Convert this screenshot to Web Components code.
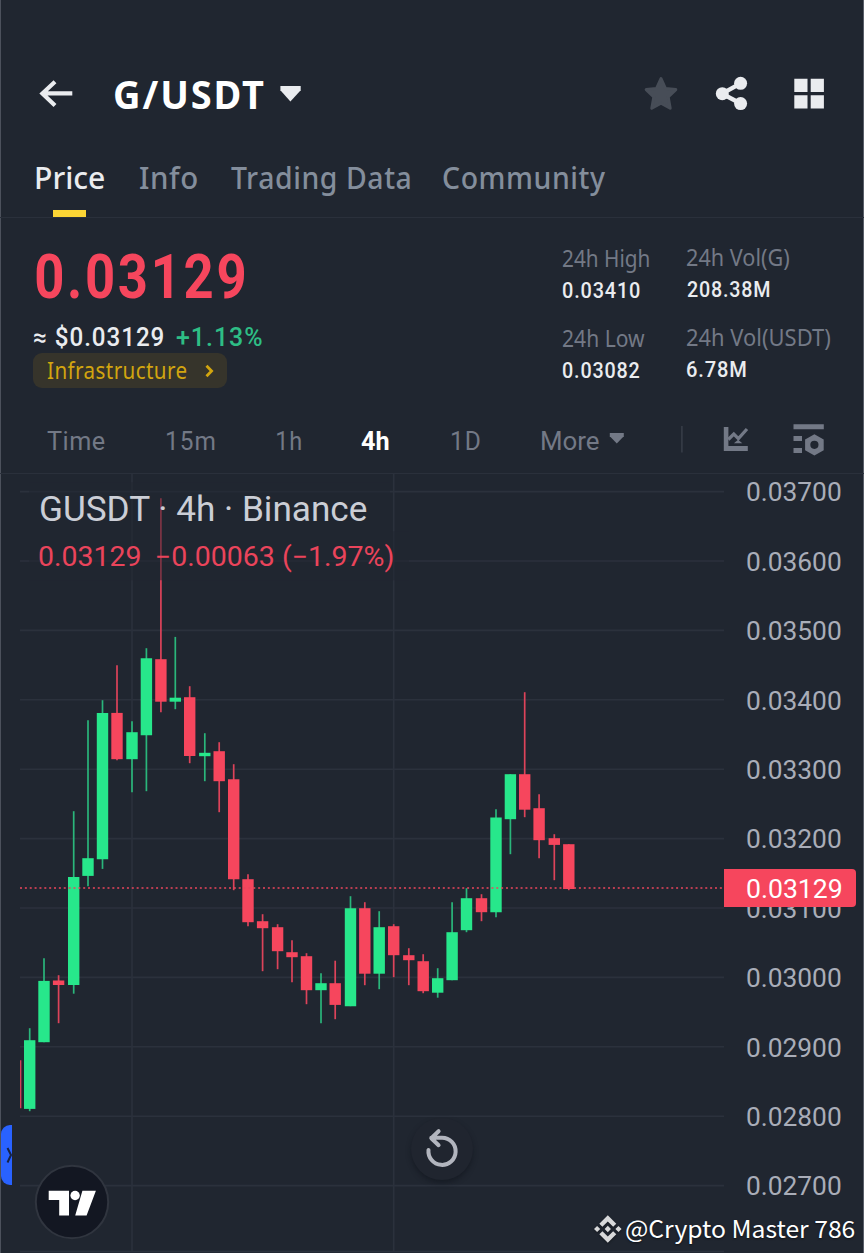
<!DOCTYPE html>
<html lang="en">
<head>
<meta charset="utf-8">
<title>G/USDT</title>
<style>
html,body{margin:0;padding:0;background:#202630}
body{width:864px;height:1253px;overflow:hidden}
</style>
</head>
<body>
<market-app></market-app>
<script>
/* Text sized by its cap height (cap) and drawn width (w); the host box spans cap top to baseline.
   track adds letter spacing in em before the width is fitted. */
const FACES = {
  roboto: {family: 'Roboto, sans-serif', cap: .711, shift: .014},
  noto: {family: '"Noto Sans", sans-serif', cap: .714, shift: -.031},
  cjk: {family: '"Noto Sans CJK SC", "Noto Sans", sans-serif', cap: .733, shift: -.07}
};
const pen = document.createElement('canvas').getContext('2d');
class FitText extends HTMLElement {
  connectedCallback() {
    const face = FACES[this.getAttribute('face') || 'roboto'];
    const cap = +this.getAttribute('cap'), w = +this.getAttribute('w');
    const weight = this.getAttribute('weight') || 400;
    const size = cap / face.cap;
    const track = (+this.getAttribute('track') || 0) * size;
    pen.font = `${weight} ${size}px ${face.family}`;
    const text = this.textContent, m = pen.measureText(text);
    const ink = m.actualBoundingBoxRight + m.actualBoundingBoxLeft + track * (text.length - 1);
    const s = w / ink, dx = m.actualBoundingBoxLeft * s;
    this.attachShadow({mode: 'open'}).innerHTML = `
      <style>
        :host{display:block;flex:none;width:${w}px;height:${cap}px}
        span{display:block;width:max-content;white-space:nowrap;font:${weight} ${size}px/${cap}px ${face.family};letter-spacing:${track}px;
          transform-origin:0 0;transform:translate(${dx}px,${face.shift * size}px) scaleX(${s})}
      </style><span><slot></slot></span>`;
  }
}

const define = (name, html) => customElements.define(name, class extends HTMLElement {
  constructor() { super(); this.attachShadow({mode: 'open'}).innerHTML = html; }
});

define('title-bar', `
<style>
:host{display:flex;height:150px;box-sizing:border-box;padding:75px 38px 0 38px;align-items:flex-start}
svg{flex:none;display:block}
fit-text{color:#fff;margin:6.4px 14.8px 0 40.5px}
.gap{flex:1}
</style>
<svg width="36" height="36" viewBox="38 75 36 36" fill="none" stroke="#eaecef" stroke-width="4.2"><path d="M72.3 93.4H43M55 81.8 42.4 93.5 55 105.6"/></svg>
<fit-text face="noto" weight="700" cap="28.5" w="149" track=".05">G/USDT</fit-text>
<svg width="26" height="36" viewBox="278.3 75 26 36"><path d="M280.7 86H301v4.3L290.7 101.4 280.7 90.3z" fill="#eaecef"/></svg>
<div class="gap"></div>
<svg width="188" height="38" viewBox="638 75 188 38">
  <path d="M661 78.6l4.4 9.8 10.4 1.2-7.6 7.4 2 11.2-9.2-5-9.2 5 2-11.2-7.6-7.4 10.4-1.2z" fill="#474d57" stroke="#474d57" stroke-width="3" stroke-linejoin="round"/>
  <g fill="#eaecef"><path d="M740.7 83.3 722 93.7l18.7 9.8" fill="none" stroke="#eaecef" stroke-width="4.4"/>
  <circle cx="722.3" cy="93.7" r="6.5"/><circle cx="740.6" cy="83.3" r="6.5"/><circle cx="740.6" cy="103.6" r="6.5"/>
  <path d="M794.3 78.7h13.2v13.2h-13.2zM810.7 78.7h13.2v13.2h-13.2zM794.3 95.2h13.2v13.4h-13.2zM810.7 95.2h13.2v13.4h-13.2z"/></g>
</svg>`);

define('section-tabs', `
<style>
:host{display:flex;height:68px;box-sizing:border-box;border-bottom:1.5px solid #2a303b;padding:17.9px 0 0 36px;align-items:flex-start;color:#848e9c}
.on{color:#eaecef;margin-right:36px}
i{display:block;width:33px;height:7px;background:#fcd535;margin:20.5px 0 0 17px}
.b{margin-right:34px}
</style>
<div class="on"><fit-text face="noto" weight="500" cap="21.6" w="68">Price</fit-text><i></i></div>
<fit-text class="b" face="noto" cap="21.6" w="56.7" weight="500" track=".02">Info</fit-text>
<fit-text class="b" face="noto" cap="21.6" w="178.7" weight="500" track=".02">Trading Data</fit-text>
<fit-text face="noto" cap="21.6" w="162" weight="500" track=".02">Community</fit-text>`);

define('market-stat', `
<style>
:host{display:block;color:#eaecef}
.k{color:#737986;margin-bottom:14.5px}
</style>
<div class="k"><slot name="label"></slot></div><slot></slot>`);

define('ticker-panel', `
<style>
:host{display:flex;height:182px;box-sizing:border-box;padding-top:37.2px;align-items:flex-start}
.main{width:527.4px;flex:none;padding-left:36px}
.big{color:#f6465d}
.row{display:flex;gap:13px;margin:30.2px 0 0 -2.3px;color:#eaecef}
.up{color:#2ebd85}
.tag{display:flex;margin:6px 0 0 -3px;width:194px;height:35px;box-sizing:border-box;border-radius:9px;background:#36342b;color:#d2a50f;padding:9.8px 0 0 14px}
.tag svg{margin:1px 0 0 18.7px}
.stats{display:grid;grid-template-columns:124px 150px;margin-top:-3.2px;row-gap:33.4px}
.lift{margin-top:-1.1px}
</style>
<div class="main">
  <fit-text class="big" weight="700" cap="43.4" w="208" track=".05">0.03129</fit-text>
  <div class="row"><fit-text weight="500" cap="18" w="129" track=".04">≈ $0.03129</fit-text><fit-text class="up" weight="500" cap="18" w="86" track=".04">+1.13%</fit-text></div>
  <div class="tag"><fit-text face="noto" cap="16.4" w="139.3" track=".02">Infrastructure</fit-text>
  <svg width="9" height="14" viewBox="0 0 9 14"><path d="M1.5 1.7 6.6 7 1.5 12.3" fill="none" stroke="#d2a50f" stroke-width="2.8"/></svg></div>
</div>
<div class="stats">
  <market-stat><fit-text slot="label" face="noto" cap="16.2" w="86.5">24h High</fit-text><fit-text weight="500" cap="15.9" w="76.7" track=".04">0.03410</fit-text></market-stat>
  <market-stat class="lift"><fit-text slot="label" face="noto" cap="16.2" w="102">24h Vol(G)</fit-text><fit-text weight="500" cap="15.9" w="82" track=".04">208.38M</fit-text></market-stat>
  <market-stat><fit-text slot="label" face="noto" cap="16.2" w="81.7">24h Low</fit-text><fit-text weight="500" cap="15.9" w="76" track=".04">0.03082</fit-text></market-stat>
  <market-stat class="lift"><fit-text slot="label" face="noto" cap="16.2" w="143">24h Vol(USDT)</fit-text><fit-text weight="500" cap="15.9" w="58.4" track=".04">6.78M</fit-text></market-stat>
</div>`);

define('interval-bar', `
<style>
:host{display:flex;height:74px;box-sizing:border-box;border-bottom:1.5px solid #2a303b;padding:31.8px 0 0 47px;align-items:flex-start;color:#737986}
svg{display:block;flex:none}
.on{color:#fff}
</style>
<fit-text cap="18.2" w="57.7" track=".02">Time</fit-text>
<fit-text style="margin-left:62px" cap="18.2" w="47.5" track=".04">15m</fit-text>
<fit-text style="margin-left:62.4px" cap="18.2" w="24.3" track=".04">1h</fit-text>
<fit-text class="on" style="margin:.9px 0 0 60.6px" weight="700" cap="18" w="27.4">4h</fit-text>
<fit-text style="margin-left:63.2px" cap="18.2" w="28.2" track=".04">1D</fit-text>
<fit-text style="margin-left:61.4px" cap="18.2" w="57">More</fit-text>
<svg style="margin:-9.8px 0 0 8.5px" width="220" height="36" viewBox="607.2 422 220 36" fill="#737986">
  <path d="M610 433h14v3.2l-7 7.3-7-7.3z"/>
  <path d="M681.3 426h1.6v26.5h-1.6z" fill="#373d48"/>
  <path d="M724 427h4.6v18.9H748v5H724z"/>
  <path d="M728.5 439.5 734 434l4.6 4.6 8.6-9.6" fill="none" stroke="#737986" stroke-width="3.2"/>
  <path d="M738.3 439.8l4.2 3.4h-8.4z"/>
  <path d="M793.7 424.2H824v5h-30.3zM793.7 436h8.5v5h-8.5zM793.7 448h8.5v5h-8.5z"/>
  <path fill-rule="evenodd" d="M814.6 434.2l9.3 5.4v10.7l-9.3 5.3-9.3-5.3v-10.7zM814.6 440.7a4.1 4.1 0 1 0 0 8.2 4.1 4.1 0 0 0 0-8.2z"/>
</svg>`);

/* [centre x, wick top, body top, body bottom, wick bottom, rising] in plot pixels */
const CANDLES = [
[29.7,1028,1040,1108.7,1111,1],[44,958,980.7,1042,1042,1],[58.6,975,980.3,984.8,1023,0],[73.7,811,876.7,984.7,993.5,1],
[88,720,858,875.7,886,1],[102.5,700,712.7,859,868.7,1],[117,665,712.7,759,760,0],[132,721,732,759,792,1],
[146.4,648,658,735,791,1],[160.9,498,659,701.5,712,0],[175.3,636.7,697.5,701.5,709,1],[189.7,686,697,755.8,763,0],
[204.8,733,752.6,756,781,1],[219.2,742,751,781,812,0],[233.7,764,779,879,890,0],[248,874,879,922,926,0],
[262.6,914,921,928,971,0],[277.6,924,927,951,969,0],[292,940,952,957,982,0],[306.5,953,956,990,1004,0],
[321,973,983,990,1023,1],[335.2,960.5,983,1004.7,1019,0],[350.5,896,908,1006,1006,1],[364.8,902,908,973.5,985,0],
[379.2,911,927,973.5,989,1],[393.7,924,926,955,977,0],[408.8,948,955,960,985,0],[423.2,954,961,991,993,0],
[437.7,968,978,992.5,997.5,1],[452.1,902,932,980,980,1],[466.5,888,898,930,932,1],[481.5,894,898,912,921,0],
[496,809,817.3,912,917,1],[510.4,774,774,819,854,1],[524.7,692,774,809.5,817,0],[539.1,794,808,840,858,0],
[554.3,834,838,844.7,880,0],[568.8,844,844,888.8,890,0]];
const grid = Array.from({length: 11}, (_, i) => `<path d="M20 ${(491.4 + i * 69.4).toFixed(1)}H724"/>`).join('');
const candles = CANDLES.map(([x, a, b, c, d, up]) => {
  const body = up ? '#27e78b' : '#f6465d', wick = up ? '#2ab67b' : '#dd435a';
  return `<path d="M${x} ${a}V${d}" stroke="${wick}" stroke-width="1.7"/><path d="M${x} ${b}V${c}" stroke="${body}" stroke-width="11.4"/>`;
}).join('');

define('candle-plot', `
<style>
:host{display:block;width:724px;height:779px}
svg{display:block}
</style>
<svg width="724" height="779" viewBox="0 473.8 724 779">
  <g stroke="#2b313c" stroke-width="1.6">${grid}<path d="M132 473V1251M393.7 473V1251M20 1251.3H724"/></g>
  <path d="M20.7 1060V1108" stroke="#dd435a" stroke-width="1.3"/>
  ${candles}
  <path d="M29 482H390v49h19v49H29z" fill="#202630" fill-opacity=".5"/>
  <path d="M20 887.8H724" stroke="#ea465c" stroke-width="1.7" stroke-dasharray="2 2.86"/>
</svg>`);

const labels = ['0.03700','0.03600','0.03500','0.03400','0.03300','0.03200','0.03100','0.03000','0.02900','0.02800','0.02700']
  .map(t => `<fit-text cap="18.6" w="94">${t}</fit-text>`).join('');
define('price-axis', `
<style>
:host{display:block;position:relative;width:140px;color:#a9adb8}
.scale{display:flex;flex-direction:column;gap:50.82px;padding:9.4px 0 0 23.1px}
.tag{position:absolute;left:0;top:394.7px;width:131.7px;height:38.3px;box-sizing:border-box;padding:10.9px 0 0 23.1px;border-radius:0 4px 4px 0;background:#f6465d;color:#fff}
</style>
<div class="scale">${labels}</div>
<div class="tag"><fit-text cap="18.6" w="94">0.03129</fit-text></div>`);

define('chart-legend', `
<style>
:host{display:block;color:#cbced6}
.row{display:flex;gap:17px;margin:26.5px 0 0 -2.2px;color:#ea445b}
</style>
<fit-text cap="24.7" w="326.7">GUSDT · 4h · Binance</fit-text>
<div class="row"><fit-text cap="19" w="101.3">0.03129</fit-text><fit-text cap="19" w="236">−0.00063 (−1.97%)</fit-text></div>`);

define('reset-button', `
<style>
:host{display:block;width:62px;height:62px;border-radius:50%;background:#20252f;box-shadow:0 3px 5px rgba(14,17,26,.5)}
</style>
<svg width="62" height="62" viewBox="411.7 1118 62 62" fill="none" stroke="#b2b5be" stroke-width="4" stroke-linecap="round" stroke-linejoin="round">
<path d="M429.2 1149.9a13.6 13.6 0 1 0 13.6-12.2H432M439.3 1131.2 432 1138.2l7.3 7"/></svg>`);

define('chart-brand', `
<style>:host{display:block}svg{display:block}</style>
<svg width="76" height="76" viewBox="34 1164.5 76 76"><circle cx="72" cy="1202.5" r="36.2" fill="#131722" stroke="#30353f" stroke-width="2"/>
<g fill="#fff"><path d="M48.7 1191.2H69V1216h-9.8v-15.4H48.7zM82.4 1191.2h13.5L86.6 1216H75.2z"/><circle cx="75.1" cy="1196" r="4.7"/></g></svg>`);

define('drawer-handle', `
<style>:host{display:block;width:10.6px;height:60px;border-radius:9px 0 0 9px;background:#2962ff;overflow:hidden}svg{display:block}</style>
<svg width="11" height="60" viewBox="1 1125 11 60"><path d="M7.5 1148 11 1155 7.5 1162.5" fill="none" stroke="#172346" stroke-width="2"/></svg>`);

define('author-mark', `
<style>
:host{display:flex;gap:4.2px;color:#fff}
svg{display:block;filter:drop-shadow(0 1px 1px rgba(0,0,0,.4))}
fit-text{margin-top:6px;text-shadow:0 1px 2px rgba(0,0,0,.55)}
</style>
<svg width="27.6" height="28" viewBox="0 0 126.6 126.6" fill="#d8d9da"><path d="M38.7 53.2l24.6-24.6 24.6 24.6 14.3-14.3L63.3 0 24.4 38.9zM0 63.3l14.3-14.3 14.3 14.3-14.3 14.3zM38.7 73.4l24.6 24.6 24.6-24.6 14.3 14.3-38.9 38.9-38.9-38.9zM98 63.3l14.3-14.3 14.3 14.3-14.3 14.3zM77.8 63.3 63.3 48.8 48.8 63.3l14.5 14.5z"/></svg>
<fit-text face="cjk" weight="400" cap="17.6" w="229">@Crypto Master 786</fit-text>`);

define('chart-area', `
<style>
:host{display:flex;position:relative;height:779px}
chart-legend,reset-button,chart-brand,drawer-handle,author-mark{position:absolute}
chart-legend{left:41.2px;top:22.5px}
reset-button{left:411.4px;top:644px}
chart-brand{left:34px;top:690.4px}
drawer-handle{left:1px;top:651px}
author-mark{left:594.3px;top:741px}
</style>
<candle-plot></candle-plot><price-axis></price-axis>
<chart-legend></chart-legend><reset-button></reset-button><chart-brand></chart-brand>
<drawer-handle></drawer-handle><author-mark></author-mark>`);

define('market-app', `
<style>
:host{display:flex;flex-direction:column;width:864px;height:1253px;overflow:hidden;
background:linear-gradient(90deg,#4c515c 1px,#202630 1px,#202630 863px,#5a5f69 863px)}
</style>
<title-bar></title-bar><section-tabs></section-tabs><ticker-panel></ticker-panel><interval-bar></interval-bar><chart-area></chart-area>`);
customElements.define('fit-text', FitText);
</script>
</body>
</html>
